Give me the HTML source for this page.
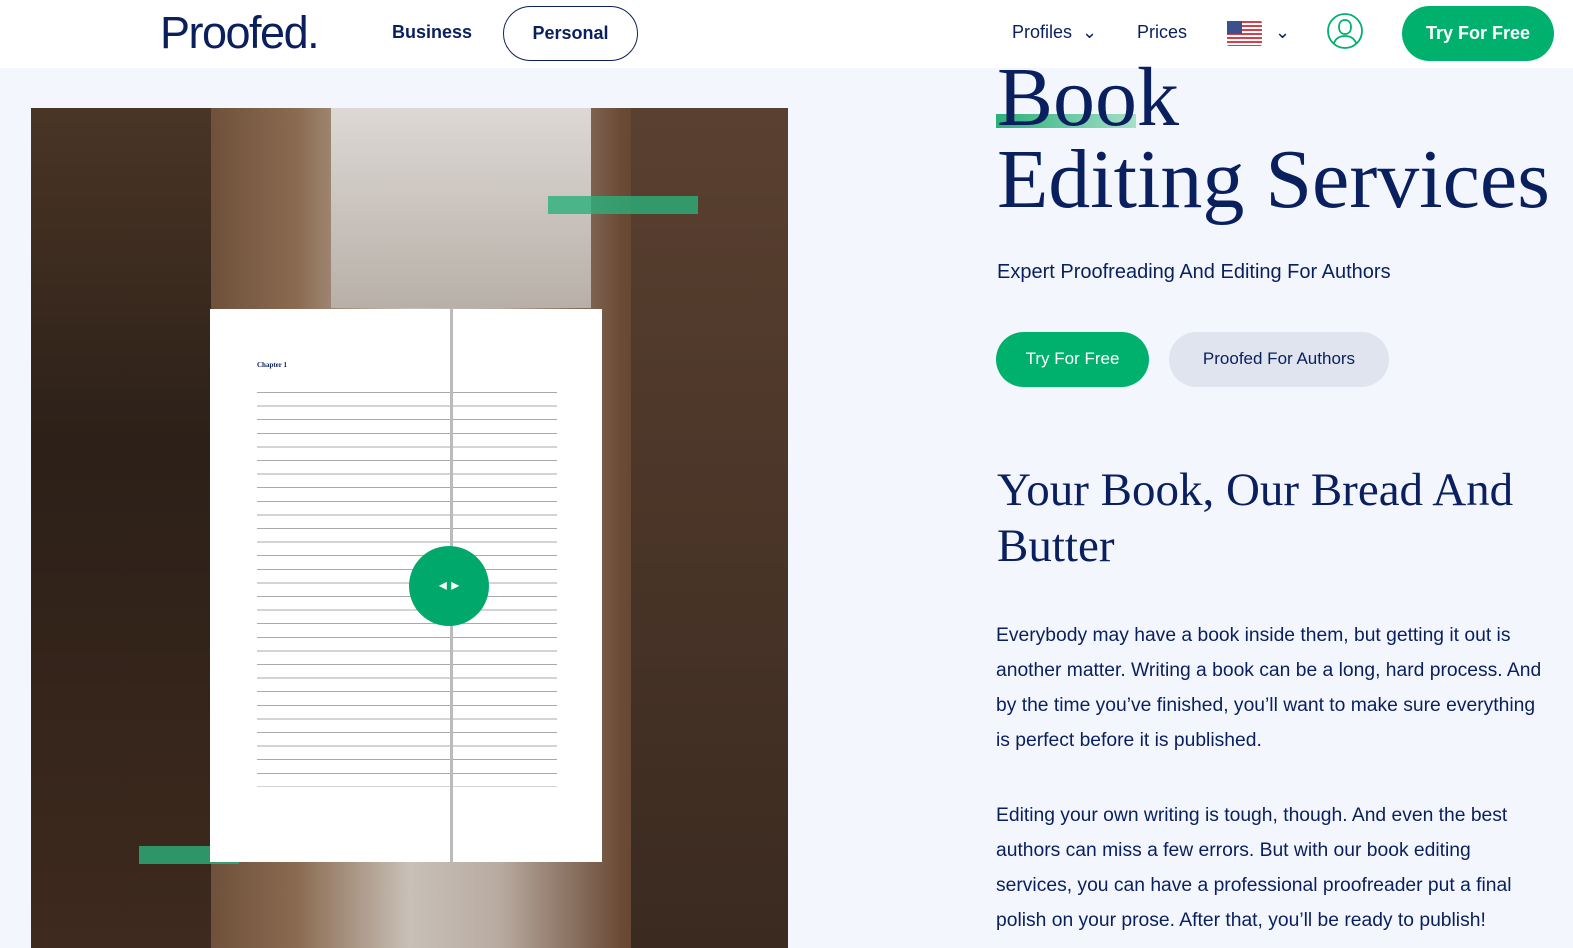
<!DOCTYPE html>
<html><head><meta charset="utf-8"><style>
*{margin:0;padding:0;box-sizing:border-box}
body{width:1573px;height:948px;overflow:hidden;background:#f3f6fd;font-family:"Liberation Sans",sans-serif;color:#0a1f5e;position:relative}
.nav{position:absolute;left:0;top:0;width:1573px;height:68px;background:#fff}
.a{position:absolute}
.logo{left:160px;top:7px;font-size:45px;letter-spacing:-1.5px;color:#0a1f5e}
.nl{font-size:18px;font-weight:bold;top:22px}
.pill{left:503px;top:6px;width:135px;height:55px;border:1.5px solid #0a1f5e;border-radius:28px;text-align:center;line-height:52px;font-size:18px;font-weight:bold}
.nr{font-size:18px;top:22px}
.btn{background:#00b06d;color:#fff;border-radius:30px;text-align:center;font-weight:bold}
.serif{font-family:"Liberation Serif",serif;color:#0a1f5e}
.photo{left:31px;top:108px;width:757px;height:840px;overflow:hidden;background:linear-gradient(90deg,#3a2a1f 0%,#5a3d2a 15%,#8a6a50 35%,#c8c0b8 50%,#b8aaa0 62%,#6a4a35 78%,#3e2c22 100%)}
.p{font-size:19.3px;line-height:35px;color:#0a1f5e}
</style></head><body>
<div class="nav">
<div class="a logo">Proofed.</div>
<div class="a nl" style="left:392px">Business</div>
<div class="a pill">Personal</div>
<div class="a nr" style="left:1012px">Profiles &nbsp;⌄</div>
<div class="a nr" style="left:1137px">Prices</div>
<div class="a" style="left:1227px;top:21px;width:35px;height:25px;border-radius:2px;background:repeating-linear-gradient(#d6404a 0 2px,#fff 2px 4px)"><div style="width:15px;height:13px;background:#3c4f8e"></div></div>
<div class="a nr" style="left:1275px">⌄</div>
<svg class="a" style="left:1326px;top:12px" width="38" height="38" viewBox="0 0 38 38" fill="none" stroke="#00b06d" stroke-width="1.8"><circle cx="19" cy="19" r="17"/><path d="M19 8c-4 0-6 3-6 7s2 7 6 7 6-3 6-7-2-7-6-7zM8 31c2-5 6-7 11-7s9 2 11 7"/></svg>
<div class="a btn" style="left:1402px;top:6px;width:152px;height:55px;line-height:55px;font-size:18px">Try For Free</div>
</div>
<div class="a photo">
<div class="a" style="left:0;top:0;width:180px;height:840px;background:linear-gradient(#4a3526,#2c2018 40%,#3e2a1e)"></div>
<div class="a" style="left:600px;top:0;width:157px;height:840px;background:linear-gradient(#5a4030,#3a2a20)"></div>
<div class="a" style="left:300px;top:0;width:260px;height:200px;background:linear-gradient(#ddd8d4,#b8b0a8)"></div>
<div class="a" style="left:517px;top:88px;width:150px;height:18px;background:#2bb07a;opacity:.8"></div>
<div class="a" style="left:108px;top:738px;width:100px;height:18px;background:#2bb07a;opacity:.8"></div>
<div class="a" style="left:179px;top:201px;width:392px;height:553px;background:#fff">
<div style="position:absolute;left:47px;top:52px;font-size:7px;font-weight:bold;font-family:'Liberation Serif',serif">Chapter 1</div>
<div style="position:absolute;left:47px;top:78px;width:300px;height:400px;background:repeating-linear-gradient(#fff 0 5px,#aaa 5px 6px,#fff 6px 13.6px)"></div>
<div style="position:absolute;left:240px;top:0;width:3px;height:553px;background:#bbb"></div>
<div style="position:absolute;left:199px;top:237px;width:80px;height:80px;border-radius:50%;background:#00a86b;color:#fff;text-align:center;line-height:80px;font-size:16px">◂ ▸</div>
</div>
</div>
<div class="a" style="left:996px;top:114px;width:140px;height:14px;background:linear-gradient(90deg,#2bb07a,#a6e0c8)"></div>
<div class="a serif" style="left:997px;top:58px;font-size:84px;line-height:80px">Book</div>
<div class="a serif" style="left:997px;top:140px;font-size:84px;line-height:80px">Editing Services</div>
<div class="a" style="left:997px;top:261px;font-size:20px">Expert Proofreading And Editing For Authors</div>
<div class="a btn" style="left:996px;top:332px;width:153px;height:55px;line-height:53px;font-size:17px;font-weight:normal">Try For Free</div>
<div class="a" style="left:1169px;top:332px;width:220px;height:55px;line-height:53px;font-size:17px;background:#dfe4ee;border-radius:28px;text-align:center">Proofed For Authors</div>
<div class="a serif" style="left:997px;top:462px;font-size:47px;line-height:56px">Your Book, Our Bread And<br>Butter</div>
<div class="a p" style="left:996px;top:618px;width:548px">Everybody may have a book inside them, but getting it out is another matter. Writing a book can be a long, hard process. And by the time you’ve finished, you’ll want to make sure everything is perfect before it is published.</div>
<div class="a p" style="left:996px;top:798px;width:548px">Editing your own writing is tough, though. And even the best authors can miss a few errors. But with our book editing services, you can have a professional proofreader put a final polish on your prose. After that, you’ll be ready to publish!</div>
</body></html>
